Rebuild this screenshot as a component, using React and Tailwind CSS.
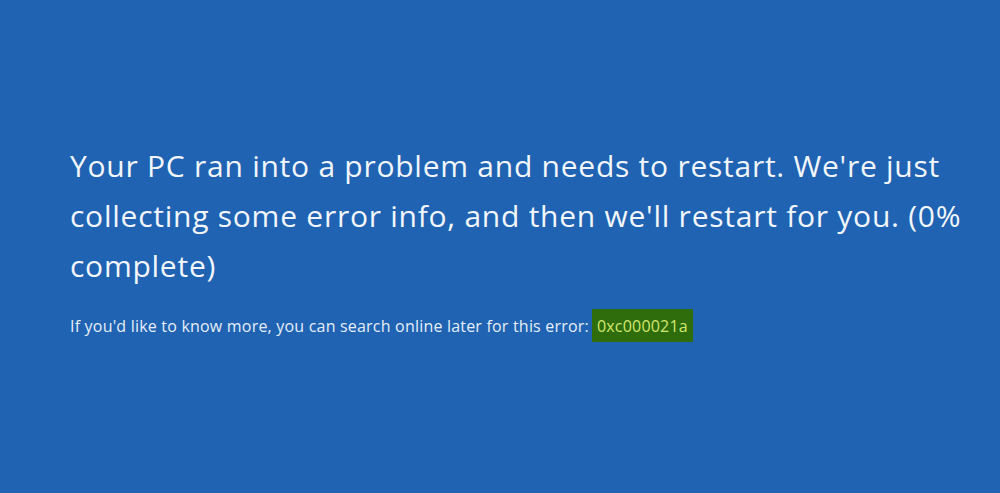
import React from "react";

const App = () => {
  return (
    <div
      className="w-[1000px] h-[493px] bg-[#1f63b2] text-white overflow-hidden pl-[70px] pt-[141px]"
      style={{ fontFamily: '"Open Sans", "Noto Sans", sans-serif' }}
    >
      <div className="text-[30px] leading-[50px] text-[#f2f6fb] tracking-[0.75px]">
        <div>Your PC ran into a problem and needs to restart. We're just</div>
        <div>collecting some error info, and then we'll restart for you. (0%</div>
        <div>complete)</div>
      </div>
      <div className="mt-[18px] h-[33px] flex items-center text-[16px] text-[#e6eef8] tracking-[0.2px] whitespace-nowrap">
        <span>If you'd like to know more, you can search online later for this error:</span>
        <span className="ml-[3px] h-[33px] flex items-center px-[5px] bg-[#2e6c0c] text-[#d3e86c]">
          0xc000021a
        </span>
      </div>
    </div>
  );
};

export default App;
